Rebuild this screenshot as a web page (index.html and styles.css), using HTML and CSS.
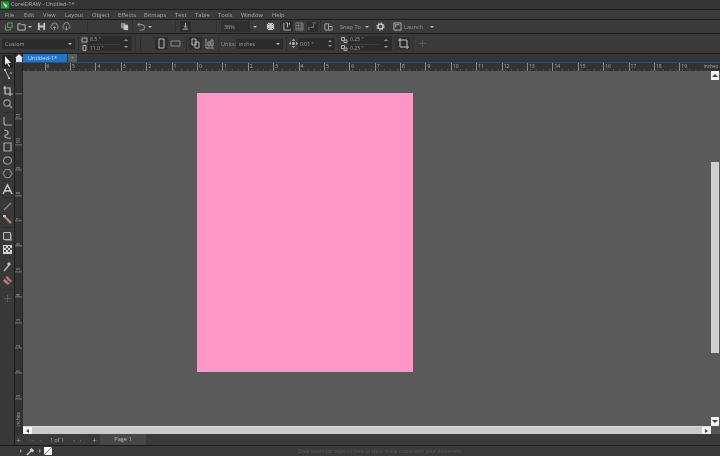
FILE: index.html
```html
<!DOCTYPE html>
<html lang="en">
<head>
<meta charset="utf-8">
<title>CorelDRAW - Untitled-1*</title>
<link rel="stylesheet" href="styles.css">
</head>
<body>
<div class="app">
  <header class="titlebar">
    <svg class="logo" viewBox="0 0 10 9"><rect width="10" height="9" fill="#1f9d3f"/><path d="M2 1l6 4-2 3z" fill="#bff0a0"/></svg>
    <span>CorelDRAW - Untitled-1*</span>
  </header>
  <nav class="menubar">
    <span class="m1">File</span><span class="m2">Edit</span><span class="m3">View</span><span class="m4">Layout</span><span class="m5">Object</span><span class="m6">Effects</span><span class="m7">Bitmaps</span><span class="m8">Text</span><span class="m9">Table</span><span class="m10">Tools</span><span class="m11">Window</span><span class="m12">Help</span>
  </nav>
  <div class="toolbar">
    <svg class="ic ml4" viewBox="0 0 10 10"><path d="M1.500 3v6h5.500V7M4 1h5v5H4z" fill="none" stroke="#6fbf73"/></svg>
    <svg class="ic ml4" viewBox="0 0 10 10"><path d="M1 2h3l1 1h4v6H1z" fill="none" stroke="#d8d8d8"/></svg>
    <i class="arrow ml2"></i>
    <svg class="ic ml5" viewBox="0 0 10 10"><path d="M1 1h8v8H1z" fill="#dcdcdc"/><path d="M3 1h4v3H3zM3 6h4v3H3z" fill="#444"/></svg>
    <svg class="ic ml4" viewBox="0 0 10 10"><path d="M2.500 7.500H2a2 2 0 0 1 0-3.500 3 3 0 0 1 6 0 2 2 0 0 1 0 3.500H7.500M5 9V5M3.500 6.500 5 5l1.500 1.500" fill="none" stroke="#bbb" stroke-width=".9"/></svg>
    <svg class="ic ml3" viewBox="0 0 10 10"><path d="M2.500 7H2a2 2 0 0 1 0-3.500 3 3 0 0 1 6 0A2 2 0 0 1 8 7H7.500M5 5v4M3.500 7.500 5 9l1.500-1.500" fill="none" stroke="#bbb" stroke-width=".9"/></svg>
    <i class="sep ml16"></i>
    <svg class="ic ml32" viewBox="0 0 10 10"><path d="M1 1h5v6H1z" fill="#999"/><path d="M4 3h5v6H4z" fill="#ddd"/></svg>
    <i class="sep ml3"></i>
    <svg class="ic ml4" viewBox="0 0 10 10"><path d="M3 1 1 3l2 2M1 3h4.500a3 3 0 0 1 0 6H3" fill="none" stroke="#bbb"/></svg>
    <i class="arrow ml2"></i>
    <i class="sep ml23"></i>
    <svg class="ic ml5 boxed" viewBox="0 0 10 10"><path d="M5 1v5M3 4.500 5 6.500l2-2M2 8h6" fill="none" stroke="#ccc"/></svg>
    <i class="sep ml26"></i>
    <div class="combo zoom ml4"><span>38%</span></div>
    <i class="arrow ml3"></i>
    <svg class="ic ml9" viewBox="0 0 10 10"><path d="M1 1h8v8H1z" fill="#ddd"/><path d="M1 1l2 2M9 1 7 3M1 9l2-2M9 9 7 7" stroke="#333"/></svg>
    <i class="sep ml5"></i>
    <svg class="ic ml2 boxed" viewBox="0 0 10 10"><path d="M1 1v8h8M3 1h2v5M7 1v2" fill="none" stroke="#ddd"/></svg>
    <svg class="ic ml3" viewBox="0 0 10 10"><path d="M1 1h8v8H1zM1 4h8M1 7h8M4 1v8M7 1v8" fill="none" stroke="#999" stroke-width=".8"/></svg>
    <svg class="ic ml4 boxed" viewBox="0 0 10 10"><path d="M1 9V5M5 1h4M6 3v3H3" fill="none" stroke="#999"/></svg>
    <i class="sep ml3"></i>
    <svg class="ic ml3" viewBox="0 0 10 10"><path d="M1 2h4v7H1zM5 5h4v4H5z" fill="none" stroke="#bbb"/><path d="M6 1l3 3" stroke="#a44"/></svg>
    <span class="label snap ml7">Snap To</span>
    <i class="arrow ml6"></i>
    <i class="sep ml3"></i>
    <svg class="ic ml3" viewBox="0 0 10 10"><circle cx="5" cy="5" r="2.800" fill="none" stroke="#e0e0e0" stroke-width="1.800"/><circle cx="5" cy="5" r="4.200" fill="none" stroke="#e0e0e0" stroke-dasharray="1.500 1.800"/></svg>
    <i class="sep ml3"></i>
    <svg class="ic ml4" viewBox="0 0 10 10"><path d="M1 1h8v8H1z" fill="none" stroke="#ccc"/><path d="M3 3h4M3 3v3" stroke="#ccc"/></svg>
    <span class="label launch ml2">Launch</span>
    <i class="arrow ml6"></i>
  </div>
  <div class="propbar">
    <div class="combo custom ml2"><span>Custom</span><i class="arrow"></i></div>
    <i class="sep tall ml3"></i>
    <div class="iconstack ml2">
      <svg viewBox="0 0 7 6"><path d="M1 1h5v4H1z" fill="none" stroke="#aaa"/></svg>
      <svg viewBox="0 0 7 6"><path d="M2 .5h3v5H2z" fill="none" stroke="#aaa"/></svg>
    </div>
    <div class="stack size"><span>8.5 "</span><span>11.0 "</span></div>
    <div class="spins"><b></b><b></b></div>
    <i class="sep tall ml3"></i>
    <i class="sep tall gapped"></i>
    <svg class="ic big ml3 boxed" viewBox="0 0 11 11"><path d="M3 1h5v9H3z" fill="none" stroke="#ccc"/></svg>
    <svg class="ic big ml3" viewBox="0 0 11 11"><path d="M1 3h9v5H1z" fill="none" stroke="#999"/></svg>
    <i class="sep tall ml5"></i>
    <svg class="ic big ml3 boxed" viewBox="0 0 11 11"><path d="M2 1h4v6H2zM5 4h4v6H5z" fill="none" stroke="#ccc"/></svg>
    <svg class="ic big ml3" viewBox="0 0 11 11"><path d="M2 1v9h8M4 4h2v4H4zM7 2h2v6H7z" fill="none" stroke="#aaa"/></svg>
    <i class="sep tall ml3"></i>
    <span class="label units ml2">Units:</span>
    <div class="combo unitbox"><span>inches</span><i class="arrow"></i></div>
    <i class="sep tall ml3"></i>
    <svg class="ic ml2" viewBox="0 0 10 10"><path d="M5 0 7 2H3zM5 10 3 8h4zM0 5l2-2v4zM10 5 8 3v4z" fill="#ccc"/><rect x="3.500" y="3.500" width="3" height="3" fill="#ccc"/></svg>
    <div class="nudge"><span>0.01 "</span><div class="spins"><b></b><b></b></div></div>
    <i class="sep tall ml3"></i>
    <div class="iconstack ml2">
      <svg viewBox="0 0 7 6"><path d="M.5.500h3v3h-3zM3 3h3v2.500H3z" fill="none" stroke="#aaa"/></svg>
      <svg viewBox="0 0 7 6"><path d="M.5.500h3v3h-3zM3 3h3v2.500H3z" fill="none" stroke="#aaa"/></svg>
    </div>
    <div class="stack dup"><span>0.25 "</span><span>0.25 "</span></div>
    <div class="spins"><b></b><b></b></div>
    <i class="sep tall ml3"></i>
    <svg class="ic big ml2 boxed" viewBox="0 0 11 11"><path d="M2 2h7v7H2z" fill="none" stroke="#ddd"/><path d="M0 2h2V0M9 11V9h2" fill="none" stroke="#ddd"/></svg>
    <i class="sep tall ml3"></i>
    <svg class="ic ml5" viewBox="0 0 10 10"><path d="M5 1v8M1 5h8" stroke="#666"/></svg>
  </div>
  <div class="main">
    <aside class="toolbox">
      <svg class="tool picked" viewBox="0 0 11 13"><path d="M3 1v9l2-2 2 4 1-1-2-3h3z" fill="#eee"/></svg>
      <svg class="tool" viewBox="0 0 11 13"><path d="M3 2l4 8" stroke="#ccc"/><rect x="2" y="1" width="2" height="2" fill="#ccc"/><rect x="6" y="9" width="2" height="2" fill="#ccc"/><rect x="8" y="4" width="2" height="2" fill="#888"/></svg>
      <i class="tsep m2"></i>
      <svg class="tool" viewBox="0 0 11 13"><path d="M3 1v8h8M1 3h7v8" fill="none" stroke="#ddd" stroke-width="1.200"/></svg>
      <svg class="tool" viewBox="0 0 11 13"><circle cx="5" cy="5" r="3.200" fill="none" stroke="#aaa" stroke-width="1.200"/><path d="M7.500 7.500 10 10" stroke="#aaa" stroke-width="1.400"/></svg>
      <i class="tsep m2"></i>
      <svg class="tool" viewBox="0 0 11 13"><path d="M2 2v6q0 2 2 2h6" fill="none" stroke="#bbb" stroke-width="1.200"/></svg>
      <svg class="tool" viewBox="0 0 11 13"><path d="M2 2c5 0 5 4 2 5s0 4 5 3" fill="none" stroke="#bbb" stroke-width="1.200"/></svg>
      <svg class="tool" viewBox="0 0 11 13"><path d="M2 2h7v8H2z" fill="none" stroke="#bbb" stroke-width="1.200"/></svg>
      <svg class="tool" viewBox="0 0 11 13"><ellipse cx="5.500" cy="6.500" rx="4" ry="3.700" fill="none" stroke="#aaa" stroke-width="1.200"/></svg>
      <svg class="tool" viewBox="0 0 11 13"><path d="M3.500 2.500h4L10 6.500l-2.500 4h-4L1 6.500z" fill="none" stroke="#999" stroke-width="1.200"/></svg>
      <i class="tsep m1"></i>
      <svg class="tool" viewBox="0 0 11 13"><path d="M1 11 5.500 2 10 11M3 8h5" fill="none" stroke="#ddd" stroke-width="1.500"/></svg>
      <i class="tsep m2"></i>
      <svg class="tool" viewBox="0 0 11 13"><path d="M2 10 9 3" stroke="#999" stroke-width="1.200"/></svg>
      <svg class="tool" viewBox="0 0 11 13"><path d="M2 3 9 10" stroke="#d8a070" stroke-width="2"/><path d="M1 2h3v2H1z" fill="#ddd"/></svg>
      <i class="tsep m2"></i>
      <svg class="tool" viewBox="0 0 11 13"><path d="M3 4h7v7H3z" fill="#777"/><path d="M1.500 2.500h7v7h-7z" fill="#444" stroke="#ccc"/></svg>
      <svg class="tool" viewBox="0 0 11 13"><path d="M1 2h9v9H1z" fill="#eee"/><path d="M2 3h2v2H2zM6 3h2v2H6zM4 5h2v2H4zM8 5h2v2H8zM2 7h2v2H2zM6 7h2v2H6z" fill="#555"/></svg>
      <i class="tsep m2"></i>
      <svg class="tool" viewBox="0 0 11 13"><path d="M2 11 7 5" stroke="#ccc" stroke-width="1.500"/><path d="M7 2l2 2-2 2-2-2z" fill="#ddd"/></svg>
      <svg class="tool t1" viewBox="0 0 11 13"><path d="M5 2 10 7 6 11 1 7z" fill="#c88a9a"/><path d="M3 4l5 5" stroke="#733" stroke-width="1.500"/></svg>
      <i class="tsep m3"></i>
      <svg class="tool" viewBox="0 0 11 13"><path d="M5.500 3v7M2 6.500h7" stroke="#666"/></svg>
    </aside>
    <div class="work">
      <div class="tabs">
        <svg class="home" viewBox="0 0 8 8"><path d="M4 0 8 4H7v4H1V4H0z" fill="#e4e4e4"/></svg>
        <div class="tab">Untitled-1*</div>
        <div class="tabadd">+</div>
      </div>
      <div class="hruler">
        <div class="corner"></div>
        <div class="hticks">
          <span>6</span><span>5</span><span>4</span><span>3</span><span>2</span><span>1</span><span>0</span><span>1</span><span>2</span><span>3</span><span>4</span><span>5</span><span>6</span><span>7</span><span>8</span><span>9</span><span>10</span><span>11</span><span>12</span><span>13</span><span>14</span><span>15</span><span>16</span><span>17</span><span>18</span><span>19</span>
          <em>inches</em>
        </div>
      </div>
      <div class="center">
        <div class="vruler">
          <span>11</span><span>10</span><span>9</span><span>8</span><span>7</span><span>6</span><span>5</span><span>4</span><span>3</span><span>2</span><span>1</span><span>0</span><span>1</span>
          <em>inches</em>
        </div>
        <div class="canvasarea">
          <div class="canvas"><div class="page"></div></div>
          <div class="hscroll">
            <div class="sbtn"><i class="tri left"></i></div>
            <div class="htrack"></div>
            <div class="sbtn"><i class="tri right"></i></div>
          </div>
        </div>
        <div class="vscroll">
          <div class="sbtn tall"><i class="tri up"></i></div>
          <div class="vtrack"><div class="vthumb"></div></div>
          <div class="sbtn tall"><i class="tri down"></i></div>
          <div class="sgrip"></div>
        </div>
      </div>
      <div class="pagebar">
        <span class="pg p1">+</span>
        <span class="pg dim p2">|◂</span>
        <span class="pg dim p3">◂</span>
        <span class="pg p4">1 of 1</span>
        <span class="pg dim p5">▸</span>
        <span class="pg dim p6">▸|</span>
        <span class="pg p7">+</span>
        <div class="pagetab">Page 1</div>
      </div>
    </div>
  </div>
  <footer class="statusbar">
    <i class="arrow right ml20"></i>
    <svg class="ic ml4" viewBox="0 0 10 10"><path d="M1 9 6 4" stroke="#ddd" stroke-width="1.600"/><path d="M6 1l3 3-2 2-3-3z" fill="#eee"/></svg>
    <i class="arrow right ml4"></i>
    <svg class="swatch ml3" viewBox="0 0 8 8"><rect width="8" height="8" fill="#fafafa"/><path d="M0 8 8 0" stroke="#777"/></svg>
    <span class="hint">Drag colors (or objects) here to store these colors with your document</span>
  </footer>
</div>
</body>
</html>
```
FILE: styles.css
```css
* { box-sizing: border-box; }
html, body { margin: 0; padding: 0; }
body { width: 720px; height: 456px; overflow: hidden; background: #383838; font-family: "Open Sans", "Liberation Sans", sans-serif; color: #a8a8a8; }
.app { display: flex; flex-direction: column; width: 720px; height: 456px; }
i { display: block; font-style: normal; flex: none; }
svg { display: block; flex: none; }

.titlebar, .menubar, .toolbar, .propbar, .toolbox, .hticks, .vruler, .pagebar, .statusbar, .tab { filter: blur(.3px); }

.titlebar { height: 10px; flex: none; display: flex; align-items: center; background: #343434; border-bottom: 1px solid #1d1d1d; font-size: 5.600px; color: #b0b0b0; padding-left: 1px; gap: 2px; line-height: 9px; }
.logo { width: 8px; height: 8px; }

.menubar { height: 10px; flex: none; display: flex; align-items: center; background: #3a3a3a; border-bottom: 1px solid #1d1d1d; font-size: 5.800px; color: #aaa; }
.menubar span { flex: none; }
.m1 { margin-left: 5px; width: 19px; }
.m2 { width: 19px; }
.m3 { width: 22px; }
.m4 { width: 27px; }
.m5 { width: 26px; }
.m6 { width: 26px; }
.m7 { width: 31px; }
.m8 { width: 20px; }
.m9 { width: 23px; }
.m10 { width: 23px; }
.m11 { width: 31px; }
.m12 { width: 20px; }

.toolbar { height: 14px; flex: none; display: flex; align-items: center; background: #3a3a3a; border-bottom: 1px solid #1d1d1d; }
.propbar { height: 20px; flex: none; display: flex; align-items: center; background: #3a3a3a; border-bottom: 1px solid #1d1d1d; }

.ic { width: 9px; height: 9px; opacity: .85; }
.ic.big { width: 11px; height: 11px; }
.boxed { background: #2b2b2b; outline: 1px solid #2b2b2b; }
.sep { width: 1px; height: 11px; background: #2f2f2f; }
.sep.tall { height: 16px; }
.gapped { margin: 0 12px 0 4px; }
.arrow { width: 0; height: 0; border-left: 2px solid transparent; border-right: 2px solid transparent; border-top: 2px solid #bbb; }
.arrow.right { border: 0; border-top: 2px solid transparent; border-bottom: 2px solid transparent; border-left: 2px solid #999; }
.label { font-size: 5.600px; color: #999; flex: none; }
.snap { width: 19px; white-space: nowrap; }
.launch { width: 20px; }

.combo { height: 10px; display: flex; align-items: center; justify-content: space-between; background: #2b2b2b; padding: 0 3px; font-size: 5.400px; color: #a0a0a0; flex: none; }
.zoom { width: 29px; height: 11px; background: #2f2f2f; }
.custom { width: 73px; }
.unitbox { width: 47px; }
.iconstack { display: flex; flex-direction: column; gap: 2px; width: 7px; flex: none; }
.iconstack svg { width: 7px; height: 6px; }
.stack { display: flex; flex-direction: column; background: #2b2b2b; font-size: 5.200px; height: 15px; padding-left: 2px; color: #a0a0a0; flex: none; }
.stack span { height: 7.500px; line-height: 7px; }
.stack span + span { border-top: 1px solid #3a3a3a; }
.size { width: 32px; }
.dup { width: 32px; }
.spins { width: 12px; height: 15px; background: #2b2b2b; display: flex; flex-direction: column; justify-content: space-around; align-items: center; flex: none; }
.spins b { display: block; width: 0; height: 0; border-left: 2px solid transparent; border-right: 2px solid transparent; border-top: 2px solid #999; }
.spins b:first-child { border-top: 0; border-bottom: 2px solid #999; }
.nudge { display: flex; align-items: center; justify-content: space-between; width: 37px; height: 12px; padding-left: 2px; background: #2b2b2b; font-size: 5.200px; flex: none; }
.nudge .spins { height: 10px; width: 10px; }
.units { width: 15px; }

.ml1 { margin-left: 1px; } .ml2 { margin-left: 2px; } .ml3 { margin-left: 3px; } .ml4 { margin-left: 4px; } .ml5 { margin-left: 5px; } .ml6 { margin-left: 6px; } .ml7 { margin-left: 7px; } .ml9 { margin-left: 9px; }
.ml16 { margin-left: 16px; } .ml20 { margin-left: 20px; } .ml23 { margin-left: 23px; } .ml26 { margin-left: 26px; } .ml32 { margin-left: 32px; }

.main { flex: 1; min-height: 0; display: flex; border-bottom: 1px solid #1d1d1d; }
.toolbox { width: 15px; flex: none; display: flex; flex-direction: column; align-items: center; background: #383838; border-right: 1px solid #1d1d1d; padding-top: 1px; }
.tool { width: 11px; height: 13px; flex: none; opacity: .85; }
.t1 { margin-top: 1px; }
.picked { background: #262626; opacity: 1; }
.tsep { width: 11px; height: 1px; background: #2f2f2f; }
.tsep.m1 { margin: 1px 0; }
.tsep.m2 { margin: 1px 0 2px; }
.tsep.m3 { margin: 2px 0; }

.work { flex: 1; min-width: 0; display: flex; flex-direction: column; }
.tabs { height: 9px; display: flex; background: #353535; border-bottom: 1px solid #32506a; flex: none; }
.home { width: 8px; height: 8px; background: #2d2d2d; }
.tab { width: 44px; height: 8px; background: #1f76d2; color: #cfe2f5; font-size: 5.600px; line-height: 8px; padding-left: 5px; }
.tabadd { width: 9px; height: 8px; background: #5b5b5b; color: #999; font-size: 6px; line-height: 8px; text-align: center; margin-left: 1px; }

.hruler { height: 8px; flex: none; display: flex; background: #333; }
.corner { width: 8px; flex: none; background: #333; border-right: 1px solid #252525; }
.hticks { flex: 1; display: flex; padding-left: 21.600px; position: relative; overflow: hidden; font-size: 5px; line-height: 7px; color: #a8a8a8; background: repeating-linear-gradient(90deg, transparent 0 5.350px, #4c4c4c 5.350px 6.350px) 0 6px / 100% 2px no-repeat; }
.hticks span { width: 25.400px; flex: none; padding-left: 1px; border-left: 1px solid #888; height: 8px; }
.hticks em { position: absolute; right: 0; top: 0; width: 26px; background: #333; font-style: normal; font-size: 4.800px; line-height: 7px; text-align: right; padding-right: 2px; }

.center { flex: 1; min-height: 0; display: flex; }
.vruler { width: 8px; flex: none; display: flex; flex-direction: column; padding-top: 22px; background: #333; border-right: 1px solid #252525; position: relative; font-size: 4.800px; color: #a0a0a0; }
.vruler span { height: 25.400px; width: 100%; flex: none; border-bottom: 1px solid #777; writing-mode: vertical-rl; transform: rotate(180deg); line-height: 7px; padding-bottom: 1px; }
.vruler em { position: absolute; bottom: 4px; left: 0; width: 8px; height: 20px; background: #333; font-style: normal; writing-mode: vertical-rl; transform: rotate(180deg); line-height: 7px; font-size: 5px; text-align: center; }

.canvasarea { flex: 1; min-width: 0; display: flex; flex-direction: column; }
.canvas { flex: 1; min-height: 0; background: #5a5a5a; padding: 22px 0 0 174px; }
.page { width: 216px; height: 279px; background: #ff96c6; }
.hscroll { height: 8px; flex: none; display: flex; background: #c9c9c9; border-top: 1px solid #dcdcdc; }
.htrack { flex: 1; }
.sbtn { width: 9px; height: 7px; background: #f4f4f4; display: flex; align-items: center; justify-content: center; flex: none; }
.sbtn.tall { width: 8px; height: 9px; }
.tri { width: 0; height: 0; }
.tri.left { border-top: 2px solid transparent; border-bottom: 2px solid transparent; border-right: 3px solid #444; }
.tri.right { border-top: 2px solid transparent; border-bottom: 2px solid transparent; border-left: 3px solid #444; }
.tri.up { border-left: 3px solid transparent; border-right: 3px solid transparent; border-bottom: 3px solid #444; }
.tri.down { border-left: 3px solid transparent; border-right: 3px solid transparent; border-top: 3px solid #444; }
.vscroll { width: 9px; flex: none; display: flex; flex-direction: column; background: #5a5a5a; padding-right: 1px; }
.vtrack { flex: 1; min-height: 0; padding-top: 82px; padding-bottom: 64px; display: flex; }
.vthumb { flex: 1; background: #cfcfcf; }
.sgrip { height: 8px; background: #555; flex: none; }

.pagebar { height: 11px; flex: none; display: flex; align-items: center; background: #3a3a3a; font-size: 5.400px; color: #aaa; }
.pg { flex: none; text-align: center; }
.dim { color: #5a5a5a; }
.p1 { width: 9px; margin-left: -1px; font-size: 8px; line-height: 8px; }
.p2 { width: 10px; margin-left: 3px; }
.p3 { width: 8px; }
.p4 { width: 22px; margin-left: 2px; }
.p5 { width: 8px; margin-left: 2px; }
.p6 { width: 10px; }
.p7 { width: 9px; margin-left: 2px; font-size: 8px; line-height: 8px; }
.pagetab { width: 46px; height: 11px; margin-left: 1px; background: #474747; text-align: center; line-height: 11px; font-size: 5.600px; color: #bbb; flex: none; }

.statusbar { height: 10px; flex: none; display: flex; align-items: center; background: #3a3a3a; }
.swatch { width: 8px; height: 8px; }
.hint { margin-left: 246px; font-size: 5px; color: #5c5c5c; white-space: nowrap; flex: none; }
```
